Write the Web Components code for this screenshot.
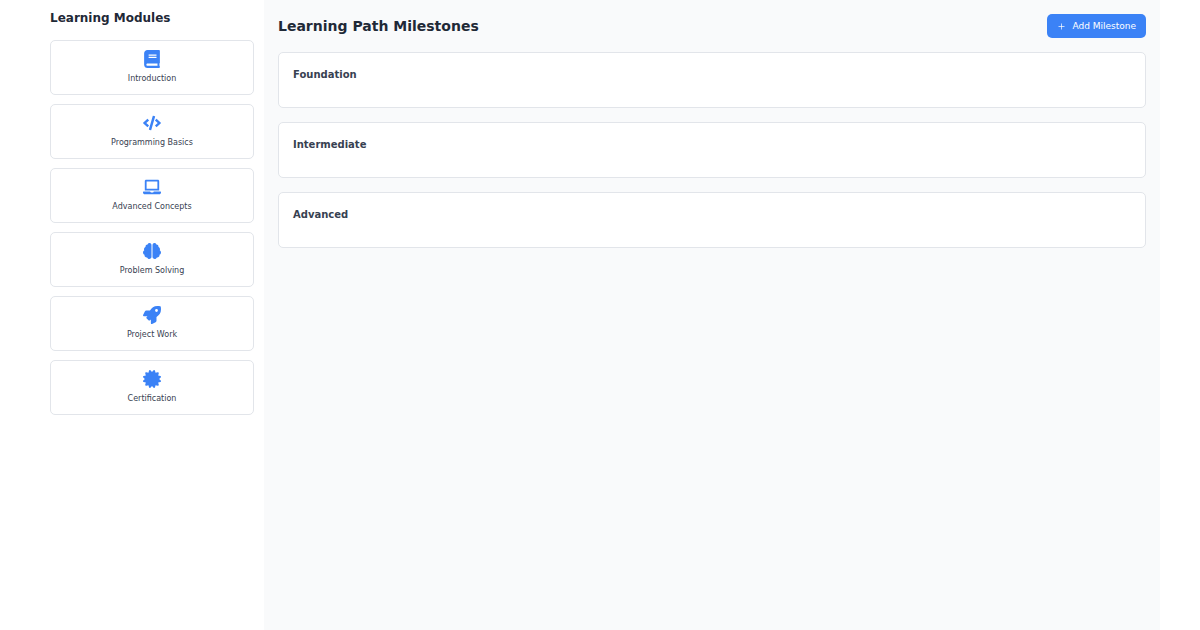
<!DOCTYPE html>
<html lang="en">
<head>
<meta charset="utf-8">
<meta name="viewport" content="width=device-width, initial-scale=1">
<title>Learning Path Milestones</title>
<style>
  :root {
    --accent: #3b82f6;
    --line: #e2e5ea;
    --ink: #1f2937;
    --ink-soft: #374151;
    --canvas: #f9fafb;
    --radius: 5px;
  }
  body {
    margin: 0;
    background: #fff;
    color: var(--ink);
    font-family: "DejaVu Sans", sans-serif;
  }
</style>
</head>
<body>
<learning-app>
  <module-sidebar slot="sidebar" heading="Learning Modules">
    <module-card icon="book">Introduction</module-card>
    <module-card icon="code">Programming Basics</module-card>
    <module-card icon="laptop">Advanced Concepts</module-card>
    <module-card icon="brain">Problem Solving</module-card>
    <module-card icon="rocket">Project Work</module-card>
    <module-card icon="certificate">Certification</module-card>
  </module-sidebar>
  <milestone-board heading="Learning Path Milestones">
    <add-button slot="action">Add Milestone</add-button>
    <milestone-card>Foundation</milestone-card>
    <milestone-card>Intermediate</milestone-card>
    <milestone-card>Advanced</milestone-card>
  </milestone-board>
</learning-app>

<script>
  const ICONS = {
    book: ['0 0 448 512', 'M448 360V24c0-13.3-10.7-24-24-24H96C43 0 0 43 0 96v320c0 53 43 96 96 96h328c13.3 0 24-10.7 24-24v-16c0-7.5-3.5-14.3-8.9-18.7-4.2-15.4-4.2-59.3 0-74.7 5.4-4.3 8.9-11.1 8.9-18.6zM128 134c0-3.3 2.7-6 6-6h212c3.3 0 6 2.7 6 6v20c0 3.3-2.7 6-6 6H134c-3.3 0-6-2.7-6-6v-20zm0 64c0-3.3 2.7-6 6-6h212c3.3 0 6 2.7 6 6v20c0 3.3-2.7 6-6 6H134c-3.3 0-6-2.7-6-6v-20zm253.4 250H96c-17.7 0-32-14.3-32-32 0-17.6 14.4-32 32-32h285.4c-1.9 17.1-1.9 46.9 0 64z'],
    code: ['0 0 640 512', 'M278.9 511.5l-61-17.7c-6.4-1.8-10-8.5-8.2-14.9L346.2 8.7c1.8-6.4 8.5-10 14.9-8.2l61 17.7c6.4 1.8 10 8.5 8.2 14.9L293.8 503.3c-1.9 6.4-8.5 10.1-14.9 8.2zm-114-112.2l43.5-46.4c4.6-4.9 4.3-12.7-.8-17.2L117 256l90.6-79.7c5.1-4.5 5.5-12.3.8-17.2l-43.5-46.4c-4.5-4.8-12.1-5.1-17-.5L3.8 247.2c-5.1 4.7-5.1 12.8 0 17.5l144.1 135.1c4.9 4.6 12.5 4.4 17-.5zm327.2.6l144.1-135.1c5.1-4.7 5.1-12.8 0-17.5L492.1 112.1c-4.8-4.5-12.4-4.3-17 .5L431.6 159c-4.6 4.9-4.3 12.7.8 17.2L523 256l-90.6 79.7c-5.1 4.5-5.5 12.3-.8 17.2l43.5 46.4c4.5 4.9 12.1 5.1 17 .6z'],
    laptop: ['0 0 640 512', 'M624 416H381.54c-.74 19.81-14.71 32-32.74 32H288c-18.69 0-33.02-17.47-32.77-32H16c-8.8 0-16 7.2-16 16v16c0 35.2 28.8 64 64 64h512c35.2 0 64-28.8 64-64v-16c0-8.8-7.2-16-16-16zM576 48c0-26.4-21.6-48-48-48H112C85.6 0 64 21.6 64 48v336h512V48zm-64 272H128V64h384v256z'],
    brain: ['0 0 576 512', 'M208 0c-29.9 0-54.7 20.5-61.8 48.2-.8 0-1.4-.2-2.2-.2-35.3 0-64 28.7-64 64 0 4.8.6 9.5 1.7 14C52.5 138 32 166.6 32 200c0 12.6 3.2 24.3 8.3 34.9C16.3 248.7 0 274.3 0 304c0 33.3 20.4 61.9 49.4 73.9-.9 4.6-1.4 9.3-1.4 14.1 0 39.8 32.2 72 72 72 4.1 0 8.1-.5 12-1.2 9.6 28.5 36.2 49.2 68 49.2 39.8 0 72-32.2 72-72V64c0-35.3-28.7-64-64-64zm368 304c0-29.7-16.3-55.3-40.3-69.1 5.2-10.6 8.3-22.3 8.3-34.9 0-33.4-20.5-62-49.7-74 1-4.5 1.7-9.2 1.7-14 0-35.3-28.7-64-64-64-.8 0-1.5.2-2.2.2C422.7 20.5 397.9 0 368 0c-35.3 0-64 28.6-64 64v376c0 39.8 32.2 72 72 72 31.8 0 58.4-20.7 68-49.2 3.9.7 7.9 1.2 12 1.2 39.8 0 72-32.2 72-72 0-4.8-.5-9.5-1.4-14.1 29-12 49.4-40.6 49.4-73.9z'],
    rocket: ['0 0 512 512', 'M505.12 19.09c-1.19-5.53-6.66-11-12.21-12.18C460.72 0 435.51 0 410.41 0 307.18 0 245.27 55.2 199.05 128H94.84c-16.35.02-35.56 11.88-42.89 26.48L2.52 253.3A28.4 28.4 0 0 0 0 264a24 24 0 0 0 24 24h103.82l-22.48 22.47c-11.36 11.36-13 32.26 0 45.25l50.9 50.9c11.16 11.19 32.16 13.16 45.28 0L224 384.16V488a24 24 0 0 0 24 24 28.56 28.56 0 0 0 10.71-2.52l98.73-49.39c14.63-7.29 26.51-26.5 26.51-42.86V312.8c72.6-46.31 128.03-108.41 128.03-211.1.1-25.2.1-50.4-6.86-82.61zM384.04 168a40 40 0 1 1 40-40 40 40 0 0 1-40 40z'],
    certificate: ['0 0 512 512', 'M458.622 255.92l45.985-45.005c13.708-12.977 7.316-36.039-10.664-40.339l-62.65-15.99 17.661-62.015c4.991-17.838-11.829-34.663-29.661-29.671l-61.994 17.667-15.984-62.671C337.085.197 313.765-6.276 300.99 7.228L256 53.57 211.011 7.229c-12.63-13.351-36.047-7.234-40.325 10.668l-15.984 62.671-61.995-17.667C74.87 57.907 58.056 74.738 63.046 92.572l17.661 62.015-62.65 15.99C.069 174.878-6.31 197.944 7.392 210.915l45.985 45.005-45.985 45.004c-13.708 12.977-7.316 36.039 10.664 40.339l62.65 15.99-17.661 62.015c-4.991 17.838 11.829 34.663 29.661 29.671l61.994-17.667 15.984 62.671c4.439 18.575 27.696 24.018 40.325 10.668L256 458.61l44.989 46.001c12.5 13.488 35.987 7.486 40.325-10.668l15.984-62.671 61.994 17.667c17.836 4.994 34.651-11.837 29.661-29.671l-17.661-62.015 62.65-15.99c17.987-4.302 24.366-27.367 10.664-40.339l-45.984-45.004z']
  };

  class LearningApp extends HTMLElement {
    constructor() {
      super();
      this.attachShadow({ mode: 'open' }).innerHTML = `
        <style>
          :host { display: flex; min-height: 100vh; margin: 0 40px; }
          aside { flex: 0 0 20%; min-width: 0; }
          main { flex: 1; min-width: 0; background: var(--canvas); }
        </style>
        <aside><slot name="sidebar"></slot></aside>
        <main><slot></slot></main>`;
    }
  }

  class ModuleSidebar extends HTMLElement {
    constructor() {
      super();
      this.attachShadow({ mode: 'open' }).innerHTML = `
        <style>
          :host { display: block; padding: 10px; }
          h2 { margin: 0 0 14px; font-size: 12px; line-height: 16px; font-weight: 700; }
          .list { display: flex; flex-direction: column; gap: 9px; }
        </style>
        <h2></h2>
        <div class="list"><slot></slot></div>`;
      this.shadowRoot.querySelector('h2').textContent = this.getAttribute('heading');
    }
  }

  class ModuleCard extends HTMLElement {
    constructor() {
      super();
      const [box, path] = ICONS[this.getAttribute('icon')];
      this.attachShadow({ mode: 'open' }).innerHTML = `
        <style>
          :host {
            display: flex; flex-direction: column; align-items: center; gap: 5px;
            padding: 9px; border: 1px solid var(--line); border-radius: var(--radius);
            background: #fff; color: var(--ink-soft); cursor: move;
            font-size: 8px; line-height: 12px; text-align: center;
          }
          svg { display: block; width: 18px; height: 18px; fill: var(--accent); }
        </style>
        <svg viewBox="${box}" aria-hidden="true"><path d="${path}"/></svg>
        <span><slot></slot></span>`;
    }
  }

  class MilestoneBoard extends HTMLElement {
    constructor() {
      super();
      this.attachShadow({ mode: 'open' }).innerHTML = `
        <style>
          :host { display: block; padding: 14px; }
          header { display: flex; align-items: center; justify-content: space-between; margin-bottom: 14px; }
          h1 { margin: 0; font-size: 14px; line-height: 20px; font-weight: 700; }
          .list { display: flex; flex-direction: column; gap: 14px; }
        </style>
        <header><h1></h1><slot name="action"></slot></header>
        <div class="list"><slot></slot></div>`;
      this.shadowRoot.querySelector('h1').textContent = this.getAttribute('heading');
    }
  }

  class MilestoneCard extends HTMLElement {
    constructor() {
      super();
      this.attachShadow({ mode: 'open' }).innerHTML = `
        <style>
          :host {
            display: block; box-sizing: border-box; min-height: 56px; padding: 14px;
            border: 1px solid var(--line); border-radius: var(--radius); background: #fff;
          }
          h3 { margin: 0; color: var(--ink-soft); font-size: 10px; line-height: 16px; font-weight: 700; }
        </style>
        <h3><slot></slot></h3>`;
    }
  }

  class AddButton extends HTMLElement {
    constructor() {
      super();
      this.attachShadow({ mode: 'open' }).innerHTML = `
        <style>
          :host { display: block; }
          button {
            display: flex; align-items: center; gap: 6px; padding: 4px 10px;
            border: 0; border-radius: var(--radius); background: var(--accent); color: #fff;
            font: inherit; font-size: 9px; line-height: 16px; cursor: pointer;
          }
          svg { display: block; width: 9px; height: 9px; }
        </style>
        <button type="button">
          <svg viewBox="0 0 9 9" fill="none" stroke="currentColor" stroke-width="0.7" aria-hidden="true"><path d="M4.5 1.5v6M1.5 4.5h6"/></svg>
          <span><slot></slot></span>
        </button>`;
    }
  }

  customElements.define('learning-app', LearningApp);
  customElements.define('module-sidebar', ModuleSidebar);
  customElements.define('module-card', ModuleCard);
  customElements.define('milestone-board', MilestoneBoard);
  customElements.define('milestone-card', MilestoneCard);
  customElements.define('add-button', AddButton);
</script>
</body>
</html>
